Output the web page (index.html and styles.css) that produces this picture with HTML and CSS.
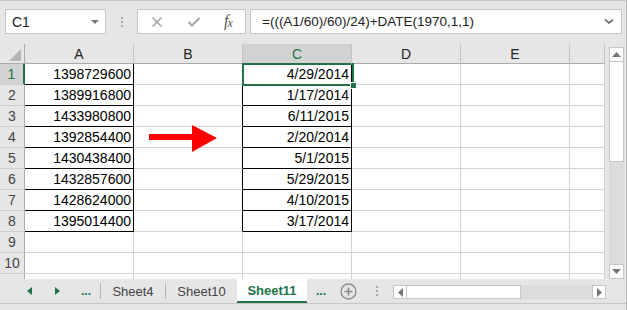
FILE: index.html
```html
<!DOCTYPE html>
<html>
<head>
<meta charset="utf-8">
<link rel="stylesheet" href="styles.css">
</head>
<body>
<div class="app">
  <div class="fbar">
    <div class="namebox"><span>C1</span><span class="caret"></span></div>
    <div class="vdots"><i></i><i></i><i></i></div>
    <div class="fbtns">
      <svg class="ico" width="12" height="12" viewBox="0 0 12 12"><path d="M1.5 1.5 L10.5 10.5 M10.5 1.5 L1.5 10.5" stroke="#a6a6a6" stroke-width="1.6" fill="none"/></svg>
      <svg class="ico" width="14" height="12" viewBox="0 0 14 12"><path d="M1.5 6 L5 9.5 L12.5 2" stroke="#a6a6a6" stroke-width="2" fill="none"/></svg>
      <span class="fx">f<sub>x</sub></span>
    </div>
    <div class="finput"><span>=(((A1/60)/60)/24)+DATE(1970,1,1)</span>
      <svg width="10" height="7" viewBox="0 0 10 7"><path d="M1 1.5 L5 5 L9 1.5" stroke="#777" stroke-width="1.8" fill="none"/></svg>
    </div>
  </div>
  <div class="main">
    <div class="sheet">
      <div class="grid">
        <div class="ch corner"><span class="tri"></span></div>
        <div class="ch">A</div><div class="ch">B</div><div class="ch sel">C</div><div class="ch">D</div><div class="ch">E</div><div class="ch"></div>

        <div class="rh sel">1</div><div class="c n bx">1398729600</div><div class="c bl"></div><div class="c n bx">4/29/2014</div><div class="c"></div><div class="c"></div><div class="c"></div>
        <div class="rh">2</div><div class="c n bx">1389916800</div><div class="c bl"></div><div class="c n bx">1/17/2014</div><div class="c"></div><div class="c"></div><div class="c"></div>
        <div class="rh">3</div><div class="c n bx">1433980800</div><div class="c bl"></div><div class="c n bx">6/11/2015</div><div class="c"></div><div class="c"></div><div class="c"></div>
        <div class="rh">4</div><div class="c n bx">1392854400</div><div class="c bl"></div><div class="c n bx">2/20/2014</div><div class="c"></div><div class="c"></div><div class="c"></div>
        <div class="rh">5</div><div class="c n bx">1430438400</div><div class="c bl"></div><div class="c n bx">5/1/2015</div><div class="c"></div><div class="c"></div><div class="c"></div>
        <div class="rh">6</div><div class="c n bx">1432857600</div><div class="c bl"></div><div class="c n bx">5/29/2015</div><div class="c"></div><div class="c"></div><div class="c"></div>
        <div class="rh">7</div><div class="c n bx">1428624000</div><div class="c bl"></div><div class="c n bx">4/10/2015</div><div class="c"></div><div class="c"></div><div class="c"></div>
        <div class="rh">8</div><div class="c n bx">1395014400</div><div class="c bl"></div><div class="c n bx">3/17/2014</div><div class="c"></div><div class="c"></div><div class="c"></div>
        <div class="rh">9</div><div class="c"></div><div class="c"></div><div class="c"></div><div class="c"></div><div class="c"></div><div class="c"></div>
        <div class="rh">10</div><div class="c"></div><div class="c"></div><div class="c"></div><div class="c"></div><div class="c"></div><div class="c"></div>
        <div class="rh"></div><div class="c"></div><div class="c"></div><div class="c"></div><div class="c"></div><div class="c"></div><div class="c"></div>
      </div>
      <div class="selbox"><span class="handle"></span></div>
      <svg class="arrow" width="70" height="28" viewBox="0 0 70 28"><rect x="0" y="9" width="45" height="6" fill="#f00"/><polygon points="43,0 68,13 43,27" fill="#f00"/></svg>
    </div>
    <div class="vscroll">
      <div class="sbtn"><svg width="9" height="5" viewBox="0 0 9 5"><polygon points="0,5 9,5 4.5,0" fill="#777"/></svg></div>
      <div class="vthumb"></div>
      <div class="vtrack"></div>
      <div class="sbtn"><svg width="9" height="5" viewBox="0 0 9 5"><polygon points="0,0 9,0 4.5,5" fill="#777"/></svg></div>
    </div>
  </div>
  <div class="tabs">
    <div class="nav"><svg width="5" height="8" viewBox="0 0 5 8"><polygon points="5,0 5,8 0,4" fill="#217346"/></svg></div>
    <div class="nav"><svg width="5" height="8" viewBox="0 0 5 8"><polygon points="0,0 0,8 5,4" fill="#217346"/></svg></div>
    <div class="more">...</div>
    <div class="sep"></div>
    <div class="tab t1">Sheet4</div>
    <div class="sep"></div>
    <div class="tab t2">Sheet10</div>
    <div class="tab active">Sheet11</div>
    <div class="more more2">...</div>
    <svg class="plus" width="17" height="17" viewBox="0 0 17 17"><circle cx="8.5" cy="8.5" r="7.5" stroke="#8a8a8a" stroke-width="1.3" fill="none"/><path d="M8.5 4.5 V12.5 M4.5 8.5 H12.5" stroke="#8a8a8a" stroke-width="1.6"/></svg>
    <div class="vdots small"><i></i><i></i><i></i></div>
    <div class="hscroll">
      <div class="hbtn"><svg width="5" height="9" viewBox="0 0 5 9"><polygon points="5,0 5,9 0,4.5" fill="#777"/></svg></div>
      <div class="hthumb"></div>
      <div class="htrack"></div>
      <div class="hbtn"><svg width="5" height="9" viewBox="0 0 5 9"><polygon points="0,0 0,9 5,4.5" fill="#777"/></svg></div>
    </div>
  </div>
  <div class="status"></div>
</div>
</body>
</html>
```

FILE: styles.css
```css
* { box-sizing: border-box; }
html, body { margin: 0; padding: 0; }
body { font-family: "Liberation Sans", Arial, sans-serif; font-size: 14px; color: #000; }

.app {
  width: 627px; height: 310px; background: #e6e6e6;
  border-top: 1px solid #c6c6c6; border-right: 1px solid #b8b8b8;
  display: flex; flex-direction: column; overflow: hidden; position: relative;
}

.fbar { height: 43px; flex: none; display: flex; align-items: flex-start; padding: 8px 0 0 5px; }
.namebox {
  width: 101px; height: 25px; background: #fff; border: 1px solid #c6c6c6;
  display: flex; align-items: center; justify-content: space-between; padding: 0 6px 0 6px; color: #222;
}
.caret { width: 0; height: 0; border-left: 4px solid transparent; border-right: 4px solid transparent; border-top: 4px solid #777; }
.vdots { width: 31px; height: 25px; display: flex; flex-direction: column; align-items: center; justify-content: center; gap: 2px; }
.vdots i { display: block; width: 2px; height: 2px; background: #a8a8a8; }
.fbtns {
  width: 109px; height: 25px; background: #fff; border: 1px solid #c6c6c6;
  display: flex; align-items: center; padding-left: 13px;
}
.fbtns .ico:first-child { margin-right: 24px; }
.fbtns .ico:nth-child(2) { margin-right: 23px; }
.fx { font-family: "Liberation Serif", serif; font-style: italic; font-size: 16px; color: #555; letter-spacing: -1px; }
.fx sub { font-size: 12px; vertical-align: -1px; }
.finput {
  margin-left: 4px; width: 372px; height: 25px; background: #fff; border: 1px solid #c6c6c6;
  display: flex; align-items: center; justify-content: space-between; padding: 0 7px 0 11px; color: #222;
  font-size: 13.5px;
}

.main { height: 235px; flex: none; display: flex; }
.sheet { width: 605px; height: 235px; position: relative; overflow: hidden; background: #fff; }
.grid {
  display: grid;
  grid-template-columns: 25px 109px 109px 109px 109px 109px 35px;
  grid-template-rows: 20px repeat(10, 21px) 21px;
}
.ch {
  background: #e6e6e6; border-bottom: 1px solid #ababab; border-right: 1px solid #c4c4c4;
  display: flex; align-items: center; justify-content: center; color: #222; padding-top: 1px;
}
.ch.corner { position: relative; border-right-color: #ababab; }
.tri { position: absolute; right: 3px; bottom: 2px; width: 0; height: 0; border-left: 12px solid transparent; border-bottom: 12px solid #b4b4b4; }
.ch.sel { background: #d2d2d2; border-bottom: 2px solid #217346; color: #217346; margin-bottom: -1px; position: relative; z-index: 1; }
.rh {
  background: #e6e6e6; border-right: 1px solid #ababab; border-bottom: 1px solid #cfcfcf;
  display: flex; align-items: center; justify-content: center; color: #444;
}
.rh.sel { background: #d2d2d2; border-right: 2px solid #217346; color: #217346; }
.c { border-right: 1px solid #d4d4d4; border-bottom: 1px solid #d4d4d4; background: #fff; }
.c.n { display: flex; align-items: center; justify-content: flex-end; padding-right: 2px; }
.c.bx { border-right-color: #000; border-bottom-color: #000; }
.c.bl { border-right-color: #000; }

.selbox {
  position: absolute; left: 242px; top: 19px; width: 112px; height: 23px;
  border: 2px solid #217346;
}
.handle {
  position: absolute; right: -5px; bottom: -5px; width: 7px; height: 7px;
  background: #217346; border: 1px solid #fff;
}
.arrow { position: absolute; left: 149px; top: 81px; }

.vscroll { width: 21px; display: flex; flex-direction: column; padding: 3px 0 0 4px; }
.sbtn {
  width: 15px; height: 15px; background: #fff; border: 1px solid #c6c6c6;
  display: flex; align-items: center; justify-content: center; flex: none;
}
.vthumb { width: 15px; height: 100px; background: #fff; border: 1px solid #c6c6c6; border-top: none; flex: none; }
.vtrack { width: 15px; flex: 1; background: #dcdcdc; }

.tabs { height: 24px; flex: none; display: flex; align-items: stretch; background: #e6e6e6; padding-left: 15px; font-size: 13px; }
.nav { width: 28px; display: flex; align-items: center; justify-content: center; }
.more { width: 29px; color: #217346; font-weight: bold; font-size: 12px; display: flex; align-items: center; padding-left: 10px; }
.sep { width: 1px; background: #b4b4b4; margin: 4px 0; }
.tab { display: flex; align-items: center; justify-content: center; color: #444; }
.tab.t1 { width: 64px; }
.tab.t2 { width: 71px; }
.tab.active { width: 70px; background: #fff; color: #217346; font-weight: bold; border-bottom: 2px solid #217346; padding-top: 1px; }
.more.more2 { width: 33px; padding-left: 9px; }
.plus { align-self: center; flex: none; }
.vdots.small { width: 36px; height: 24px; padding-left: 4px; }
.hscroll { display: flex; align-items: center; width: 213px; height: 14px; align-self: center; margin-top: 2px; }
.hbtn { width: 14px; height: 14px; background: #fff; border: 1px solid #c6c6c6; display: flex; align-items: center; justify-content: center; flex: none; }
.hthumb { width: 114px; height: 14px; background: #fff; border: 1px solid #c6c6c6; border-left: none; flex: none; }
.htrack { flex: 1; height: 14px; background: #dcdcdc; }

.status { flex: 1; border-top: 1px solid #c6c6c6; background: #e6e6e6; }
```
